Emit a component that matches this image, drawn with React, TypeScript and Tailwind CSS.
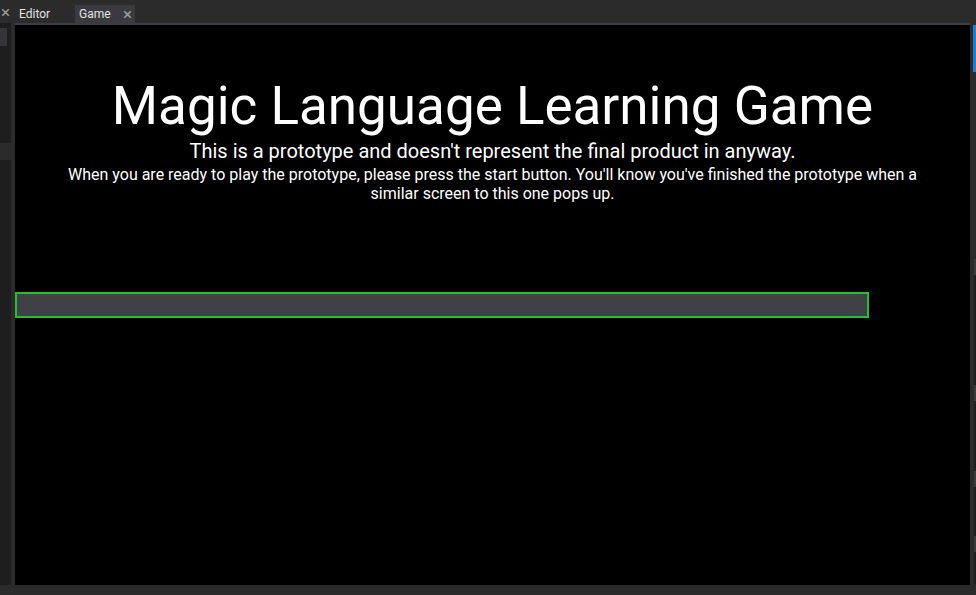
export default function App() {
  return (
    <div className="flex h-[595px] w-[976px] flex-col overflow-hidden bg-[#2b2b2b] font-['Roboto',sans-serif] text-white">
      {/* editor tab strip */}
      <div className="flex h-[23px] shrink-0 items-end text-[12px] text-[#e2e2e2]">
        <span className="mb-[2px] w-[19px] -translate-x-[4px] text-center text-[17px] leading-none text-[#9a9a9a]">
          ×
        </span>
        <span className="mb-[3px] w-[56px] leading-none">Editor</span>
        <div className="flex h-[18px] w-[60px] items-center justify-between bg-[#3a3a40] pl-[4px] pr-[3px]">
          <span className="leading-none">Game</span>
          <span className="text-[17px] leading-none text-[#a0a0a0]">×</span>
        </div>
      </div>

      <div className="flex h-[562px] shrink-0">
        {/* side panel */}
        <div className="flex w-[11px] flex-col bg-[#1e1e1e] pt-[5px]">
          <div className="h-[18px] w-[7px] bg-[#35353a]" />
          <div className="mt-[97px] h-[17px] w-[11px] bg-[#2b2b2b]" />
        </div>
        <div className="w-[4px]" />

        {/* game viewport */}
        <div className="flex w-[955px] flex-col">
          <div className="h-[2px] bg-[#3c3c43]" />
          <div className="flex flex-1 flex-col bg-black">
            <h1 className="mt-[55px] text-center text-[53px] font-normal leading-none">
              Magic Language Learning Game
            </h1>
            <p className="mt-[8px] text-center text-[20px] leading-none">
              This is a prototype and doesn't represent the final product in anyway.
            </p>
            <p className="mx-auto mt-[4px] w-[870px] text-center text-[16px] leading-[19px]">
              When you are ready to play the prototype, please press the start button. You'll know
              you've finished the prototype when a similar screen to this one pops up.
            </p>
            <div className="mt-[89px] h-[26px] w-[854px] border-2 border-[#1fc22a] bg-[#404046]" />
          </div>
        </div>

        {/* right scroll strip */}
        <div className="flex w-[6px] flex-col items-end">
          <div className="h-[2px]" />
          <div className="h-[47px] w-[3px] bg-[#1b7fd4]" />
          <div className="mt-[187px] flex h-[326px] w-[2px] flex-col bg-[#1e1e1e]">
            <div className="h-[16px] w-[2px] bg-[#3a3a3a]" />
            <div className="mt-[110px] h-[16px] w-[2px] bg-[#3a3a3a]" />
            <div className="mt-[70px] h-[16px] w-[2px] bg-[#3a3a3a]" />
            <div className="mt-[49px] h-[16px] w-[2px] bg-[#3a3a3a]" />
          </div>
        </div>
      </div>
    </div>
  );
}
